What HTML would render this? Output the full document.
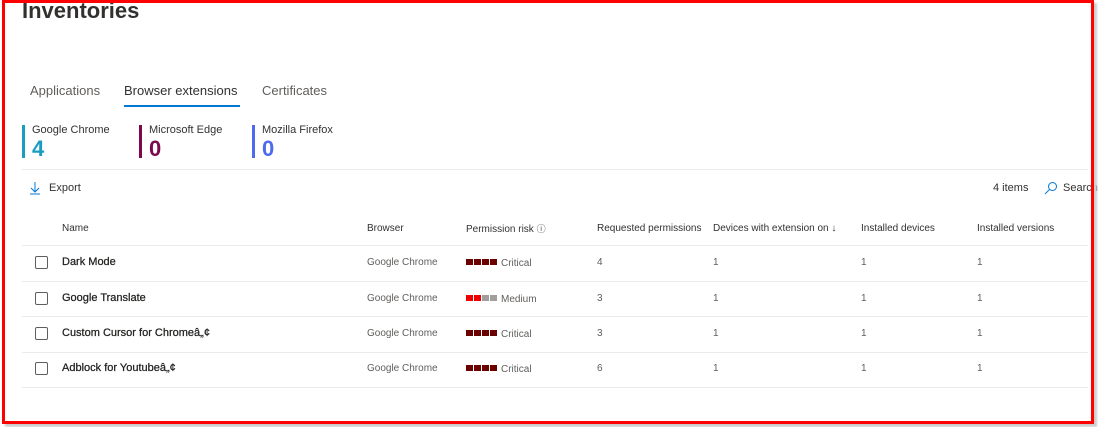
<!DOCTYPE html>
<html><head><meta charset="utf-8"><style>
*{margin:0;padding:0;box-sizing:border-box}
body{width:1100px;height:427px;background:#fff;position:relative;overflow:hidden;font-family:"Liberation Sans",sans-serif;color:#323130}
.a{position:absolute;white-space:nowrap}
.frame{position:absolute;left:2px;top:0;width:1092px;height:424px;border:3px solid #f00;box-shadow:3px 3px 2px #ccc}
.line{position:absolute;left:22px;width:1066px;height:1px;background:#edebe9}
.h{font-size:10px;color:#323130;top:223px}
.c{font-size:10px;color:#605e5c}
.n{font-size:11px;color:#201f1e;left:62px;-webkit-text-stroke:0.25px #201f1e}
.cb{position:absolute;left:35px;width:13px;height:13px;border:1px solid #605e5c;border-radius:2px}
.sq{display:inline-block;width:7px;height:6px;margin-right:1px;vertical-align:1px}
.sq.l{margin-right:4px}
.k{background:#6b0000}.r{background:#e00}.g{background:#a19f9d}
</style></head><body>
<div class="a" style="left:22px;top:-2px;font-size:22px;font-weight:bold;color:#323130">Inventories</div>
<div class="a" style="left:30px;top:83px;font-size:13px;color:#605e5c">Applications</div>
<div class="a" style="left:124px;top:83px;font-size:13px;color:#323130">Browser extensions</div>
<div class="a" style="left:124px;top:105px;width:116px;height:2px;background:#0078d4"></div>
<div class="a" style="left:262px;top:83px;font-size:13px;color:#605e5c">Certificates</div>

<div class="a" style="left:22px;top:125px;width:3px;height:33px;background:#1a9ec0"></div>
<div class="a" style="left:32px;top:124px;font-size:11px">Google Chrome</div>
<div class="a" style="left:32px;top:136px;font-size:22px;font-weight:bold;color:#1a9ec0">4</div>
<div class="a" style="left:139px;top:125px;width:3px;height:33px;background:#7a0a4b"></div>
<div class="a" style="left:149px;top:124px;font-size:11px">Microsoft Edge</div>
<div class="a" style="left:149px;top:136px;font-size:22px;font-weight:bold;color:#7a0a4b">0</div>
<div class="a" style="left:252px;top:125px;width:3px;height:33px;background:#4f6bed"></div>
<div class="a" style="left:262px;top:124px;font-size:11px">Mozilla Firefox</div>
<div class="a" style="left:262px;top:136px;font-size:22px;font-weight:bold;color:#4f6bed">0</div>
<div class="line" style="top:169px"></div>

<svg class="a" style="left:29px;top:181px" width="12" height="14" viewBox="0 0 12 14"><path d="M6 1v10M2 7l4 4 4-4M1 13h10" stroke="#0078d4" fill="none" stroke-width="1"/></svg>
<div class="a" style="left:49px;top:182px;font-size:11px">Export</div>
<div class="a" style="left:993px;top:182px;font-size:11px">4 items</div>
<svg class="a" style="left:1044px;top:181px" width="14" height="14" viewBox="0 0 14 14"><circle cx="8.5" cy="5.5" r="4" stroke="#0078d4" fill="none"/><path d="M5.5 8.5L1 13" stroke="#0078d4"/></svg>
<div class="a" style="left:1063px;top:182px;font-size:11px">Search</div>

<div class="a h" style="left:62px">Name</div>
<div class="a h" style="left:367px">Browser</div>
<div class="a h" style="left:466px;top:222px">Permission risk <span style="font-size:9px">ⓘ</span></div>
<div class="a h" style="left:597px">Requested permissions</div>
<div class="a h" style="left:713px">Devices with extension on ↓</div>
<div class="a h" style="left:861px">Installed devices</div>
<div class="a h" style="left:977px">Installed versions</div>
<div class="line" style="top:245px"></div>

<div class="cb" style="top:256px"></div><div class="a n" style="top:256px">Dark Mode</div>
<div class="a c" style="left:367px;top:257px">Google Chrome</div>
<div class="a c" style="left:466px;top:258px"><span class="sq k"></span><span class="sq k"></span><span class="sq k"></span><span class="sq k l"></span>Critical</div>
<div class="a c" style="left:597px;top:257px">4</div><div class="a c" style="left:713px;top:257px">1</div><div class="a c" style="left:861px;top:257px">1</div><div class="a c" style="left:977px;top:257px">1</div>
<div class="line" style="top:281px"></div>

<div class="cb" style="top:292px"></div><div class="a n" style="top:292px">Google Translate</div>
<div class="a c" style="left:367px;top:293px">Google Chrome</div>
<div class="a c" style="left:466px;top:294px"><span class="sq r"></span><span class="sq r"></span><span class="sq g"></span><span class="sq g l"></span>Medium</div>
<div class="a c" style="left:597px;top:293px">3</div><div class="a c" style="left:713px;top:293px">1</div><div class="a c" style="left:861px;top:293px">1</div><div class="a c" style="left:977px;top:293px">1</div>
<div class="line" style="top:316px"></div>

<div class="cb" style="top:327px"></div><div class="a n" style="top:327px">Custom Cursor for Chromeâ„¢</div>
<div class="a c" style="left:367px;top:328px">Google Chrome</div>
<div class="a c" style="left:466px;top:329px"><span class="sq k"></span><span class="sq k"></span><span class="sq k"></span><span class="sq k l"></span>Critical</div>
<div class="a c" style="left:597px;top:328px">3</div><div class="a c" style="left:713px;top:328px">1</div><div class="a c" style="left:861px;top:328px">1</div><div class="a c" style="left:977px;top:328px">1</div>
<div class="line" style="top:352px"></div>

<div class="cb" style="top:362px"></div><div class="a n" style="top:362px">Adblock for Youtubeâ„¢</div>
<div class="a c" style="left:367px;top:363px">Google Chrome</div>
<div class="a c" style="left:466px;top:364px"><span class="sq k"></span><span class="sq k"></span><span class="sq k"></span><span class="sq k l"></span>Critical</div>
<div class="a c" style="left:597px;top:363px">6</div><div class="a c" style="left:713px;top:363px">1</div><div class="a c" style="left:861px;top:363px">1</div><div class="a c" style="left:977px;top:363px">1</div>
<div class="line" style="top:387px"></div>

<div class="frame"></div>
</body></html>
